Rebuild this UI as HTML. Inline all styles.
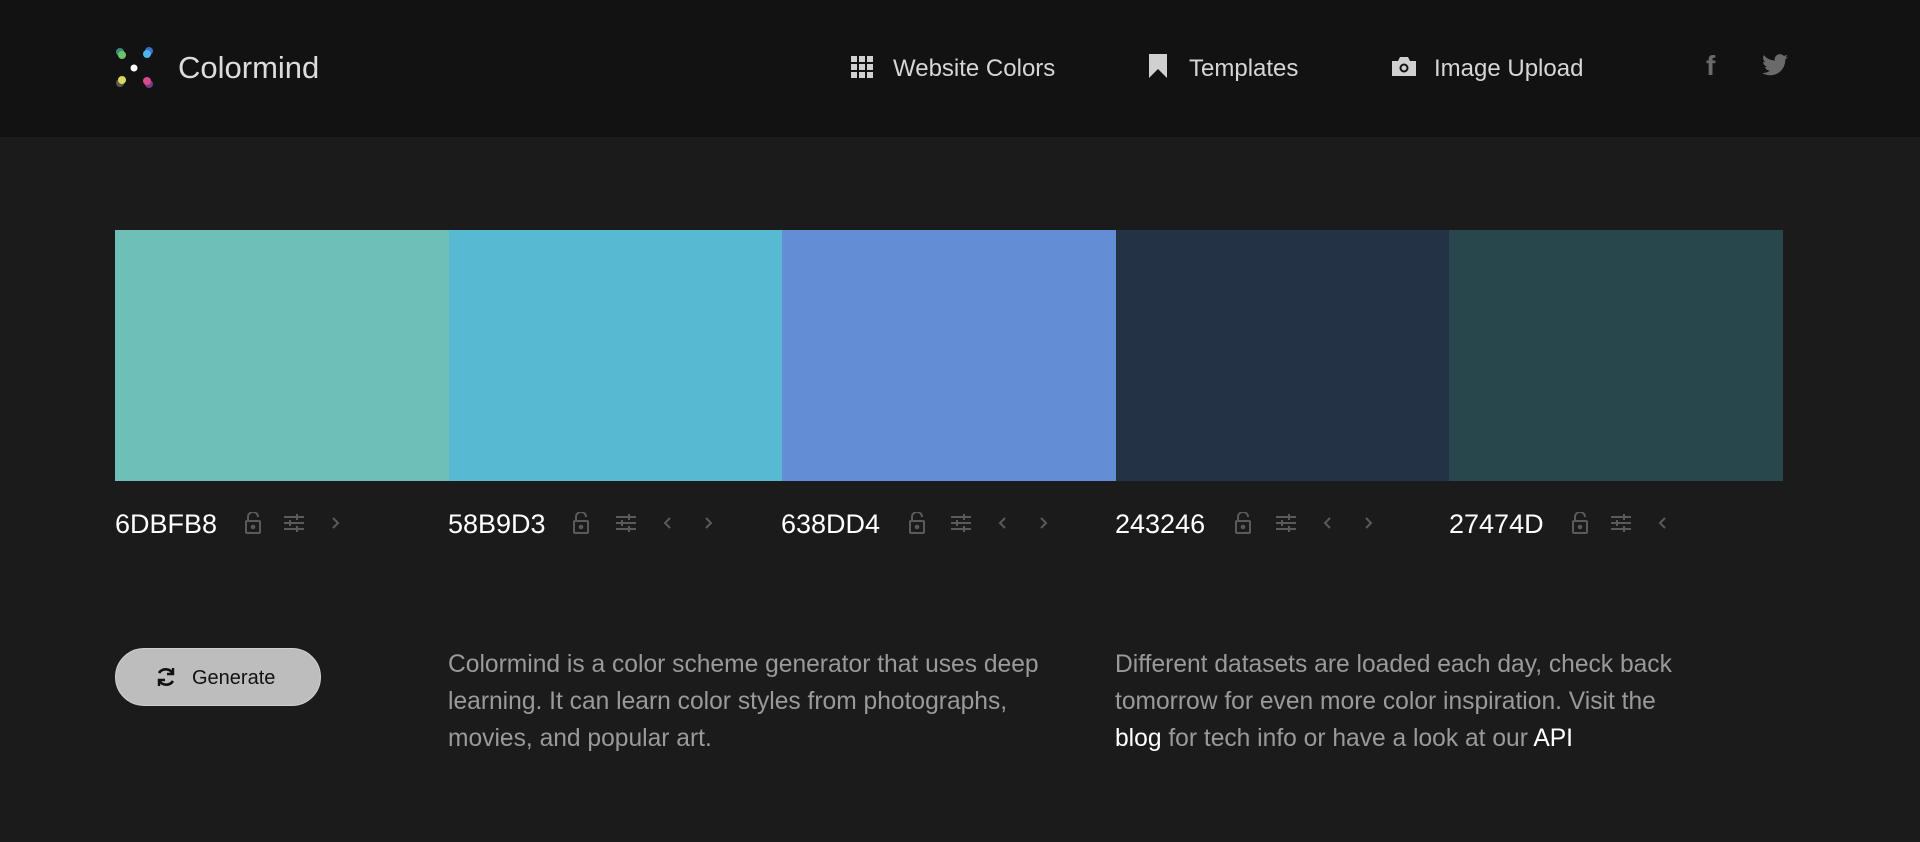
<!DOCTYPE html>
<html><head><meta charset="utf-8"><style>
*{margin:0;padding:0;box-sizing:border-box}
body{width:1920px;height:842px;background:#1b1b1b;font-family:"Liberation Sans",sans-serif;overflow:hidden;position:relative}
.hdr{position:absolute;left:0;top:0;width:1920px;height:137px;background:#121212}
.abs{position:absolute}
.nav{color:#d6d6d6;font-size:24px;top:55px}
.sw{position:absolute;top:230px;height:251px;width:334px}
.hex{position:absolute;top:509px;color:#fff;font-size:27px}
.ic{position:absolute;top:512px}
p.t{position:absolute;top:646px;color:#9a9a9a;font-size:24.6px;line-height:37px;width:610px}
p.t b{color:#fff;font-weight:normal}
</style></head><body>
<div class="hdr"></div>
<svg class="abs" style="left:113px;top:46px" width="44" height="44">
<circle cx="7" cy="6" r="4" fill="#3d8a7a"/><circle cx="9" cy="9" r="4" fill="#6ac46a"/>
<circle cx="36" cy="5" r="4" fill="#3c6ec8"/><circle cx="34" cy="8" r="4" fill="#4cb6e8"/>
<circle cx="21" cy="22" r="3.5" fill="#fff"/>
<circle cx="7" cy="37" r="4" fill="#5a5a48"/><circle cx="9" cy="34" r="4" fill="#d8d860"/>
<circle cx="36" cy="38" r="4" fill="#7a3a8a"/><circle cx="34" cy="35" r="4" fill="#d84a8a"/>
</svg>
<div class="abs" style="left:178px;top:50px;color:#dcdcdc;font-size:31px">Colormind</div>
<svg class="abs" style="left:851px;top:56px" width="22" height="22" fill="#d0d0d0"><rect x="0" y="0" width="6" height="6"/><rect x="8" y="0" width="6" height="6"/><rect x="16" y="0" width="6" height="6"/><rect x="0" y="8" width="6" height="6"/><rect x="8" y="8" width="6" height="6"/><rect x="16" y="8" width="6" height="6"/><rect x="0" y="16" width="6" height="6"/><rect x="8" y="16" width="6" height="6"/><rect x="16" y="16" width="6" height="6"/></svg>
<div class="abs nav" style="left:893px">Website Colors</div>
<svg class="abs" style="left:1149px;top:54px" width="18" height="24"><path d="M0 0H18V24L9 15L0 24Z" fill="#d0d0d0"/></svg>
<div class="abs nav" style="left:1189px">Templates</div>
<svg class="abs" style="left:1392px;top:56px" width="24" height="20"><path d="M0 5H6L8 1H16L18 5H24V20H0Z" fill="#d0d0d0"/><circle cx="12" cy="12" r="4.5" fill="#121212"/><circle cx="12" cy="12" r="2.5" fill="#d0d0d0"/></svg>
<div class="abs nav" style="left:1434px">Image Upload</div>
<div class="abs" style="left:1706px;top:50px;color:#6a6a6a;font-size:28px;font-weight:bold">f</div>
<svg class="abs" style="left:1762px;top:54px" width="26" height="22" viewBox="0 0 24 20"><path d="M24 2.4a9.8 9.8 0 0 1-2.8.8A4.9 4.9 0 0 0 23.3.4a9.9 9.9 0 0 1-3.1 1.200A4.9 4.9 0 0 0 11.8 6 14 14 0 0 1 1.7.9a4.9 4.9 0 0 0 1.5 6.6A4.9 4.9 0 0 1 1 6.9a4.9 4.9 0 0 0 3.9 4.8 4.9 4.9 0 0 1-2.2.1 4.9 4.9 0 0 0 4.6 3.4A9.9 9.9 0 0 1 0 17.3 14 14 0 0 0 7.5 19.5c9 0 14-7.5 14-14v-.6A10 10 0 0 0 24 2.4z" fill="#6a6a6a"/></svg>

<div class="sw" style="left:115px;background:#6DBFB8"></div>
<div class="sw" style="left:449px;background:#58B9D3"></div>
<div class="sw" style="left:782px;background:#638DD4"></div>
<div class="sw" style="left:1116px;background:#243246"></div>
<div class="sw" style="left:1449px;background:#27474D;width:334px"></div>

<div class="hex" style="left:115px">6DBFB8</div>
<div class="hex" style="left:448px">58B9D3</div>
<div class="hex" style="left:781px">638DD4</div>
<div class="hex" style="left:1115px">243246</div>
<div class="hex" style="left:1449px">27474D</div>

<svg width="0" height="0" style="position:absolute"><defs>
<g id="lk" fill="none" stroke="#5a5a5a" stroke-width="2"><path d="M4 9V5a5 5 0 0 1 10 0"/><rect x="2" y="9" width="14" height="12" rx="1"/><circle cx="9" cy="15" r="1.3" fill="#5a5a5a"/></g>
<g id="sl" stroke="#5a5a5a" stroke-width="2"><path d="M0 4H20M0 10H20M0 16H20"/><path d="M13 1V7M6 7V13M13 13V19"/></g>
<path id="rt" d="M2 2L7 7L2 12" fill="none" stroke="#5a5a5a" stroke-width="2"/>
<path id="lt" d="M7 2L2 7L7 12" fill="none" stroke="#5a5a5a" stroke-width="2"/>
</defs></svg>

<svg class="ic" style="left:244px" width="18" height="22"><use href="#lk"/></svg>
<svg class="ic" style="left:284px;top:513px" width="20" height="20"><use href="#sl"/></svg>
<svg class="ic" style="left:331px;top:516px" width="10" height="14"><use href="#rt"/></svg>

<svg class="ic" style="left:572px" width="18" height="22"><use href="#lk"/></svg>
<svg class="ic" style="left:616px;top:513px" width="20" height="20"><use href="#sl"/></svg>
<svg class="ic" style="left:663px;top:516px" width="10" height="14"><use href="#lt"/></svg>
<svg class="ic" style="left:704px;top:516px" width="10" height="14"><use href="#rt"/></svg>

<svg class="ic" style="left:908px" width="18" height="22"><use href="#lk"/></svg>
<svg class="ic" style="left:951px;top:513px" width="20" height="20"><use href="#sl"/></svg>
<svg class="ic" style="left:998px;top:516px" width="10" height="14"><use href="#lt"/></svg>
<svg class="ic" style="left:1039px;top:516px" width="10" height="14"><use href="#rt"/></svg>

<svg class="ic" style="left:1234px" width="18" height="22"><use href="#lk"/></svg>
<svg class="ic" style="left:1276px;top:513px" width="20" height="20"><use href="#sl"/></svg>
<svg class="ic" style="left:1323px;top:516px" width="10" height="14"><use href="#lt"/></svg>
<svg class="ic" style="left:1364px;top:516px" width="10" height="14"><use href="#rt"/></svg>

<svg class="ic" style="left:1571px" width="18" height="22"><use href="#lk"/></svg>
<svg class="ic" style="left:1611px;top:513px" width="20" height="20"><use href="#sl"/></svg>
<svg class="ic" style="left:1658px;top:516px" width="10" height="14"><use href="#lt"/></svg>

<div class="abs" style="left:115px;top:648px;width:206px;height:58px;border-radius:29px;background:#bdbdbd;border:1px solid #d0d0d0"></div>
<svg class="abs" style="left:155px;top:666px" width="22" height="22" viewBox="0 0 22 22" fill="none" stroke="#111" stroke-width="2.6"><path d="M18 8A8 8 0 0 0 4 7"/><path d="M4 14A8 8 0 0 0 18 15"/><path d="M18 2V8H12" stroke-width="2.4"/><path d="M4 20V14H10" stroke-width="2.4"/></svg>
<div class="abs" style="left:192px;top:667px;color:#111;font-size:20px">Generate</div>

<p class="t" style="left:448px">Colormind is a color scheme generator that uses deep learning. It can learn color styles from photographs, movies, and popular art.</p>
<p class="t" style="left:1115px;width:575px">Different datasets are loaded each day, check back tomorrow for even more color inspiration. Visit the <b>blog</b> for tech info or have a look at our <b>API</b></p>
</body></html>
